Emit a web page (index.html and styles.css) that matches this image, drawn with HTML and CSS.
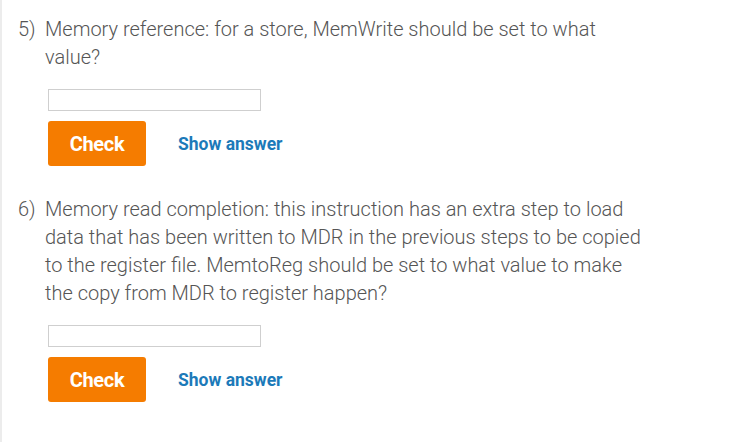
FILE: index.html
```html
<!DOCTYPE html>
<html>
<head>
<meta charset="utf-8">
<link rel="stylesheet" href="styles.css">
</head>
<body>
<div class="page">
  <div class="question">
    <div class="prompt">
      <span class="num">5)</span>
      <p class="text">Memory reference: for a store, MemWrite should be set to what value?</p>
    </div>
    <div class="answer">
      <input class="field" type="text">
      <div class="actions">
        <button class="check">Check</button>
        <span class="show">Show answer</span>
      </div>
    </div>
  </div>
  <div class="question">
    <div class="prompt">
      <span class="num">6)</span>
      <p class="text">Memory read completion: this instruction has an extra step to load data that has been written to MDR in the previous steps to be copied to the register file. MemtoReg should be set to what value to make the copy from MDR to register happen?</p>
    </div>
    <div class="answer">
      <input class="field" type="text">
      <div class="actions">
        <button class="check">Check</button>
        <span class="show">Show answer</span>
      </div>
    </div>
  </div>
</div>
</body>
</html>
```
FILE: styles.css
```css
html, body {
  margin: 0;
  padding: 0;
  background: #fff;
}
.page {
  border-left: 2px solid #ececec;
  height: 442px;
  box-sizing: border-box;
  padding: 15px 0 0 16px;
  font-family: Roboto, "Liberation Sans", sans-serif;
}
.question {
  display: flex;
  flex-direction: column;
  margin-bottom: 29px;
}
.prompt {
  display: flex;
  color: #555;
  font-size: 20px;
  font-weight: 300;
  line-height: 28px;
}
.num {
  width: 27px;
  flex: none;
}
.text {
  margin: 0;
  width: 600px;
}
.answer {
  padding-left: 30px;
  display: flex;
  flex-direction: column;
  gap: 10px;
  margin-top: 18px;
}
.field {
  width: 213px;
  height: 22px;
  box-sizing: border-box;
  border: 1px solid #cfcfcf;
  margin: 0;
  padding: 0;
}
.actions {
  display: flex;
  align-items: center;
  gap: 32px;
}
.check {
  width: 98px;
  height: 45px;
  background: #f57c00;
  color: #fff;
  border: none;
  border-radius: 3px;
  font-family: Roboto, "Liberation Sans", sans-serif;
  font-weight: 700;
  font-size: 20px;
  letter-spacing: -0.3px;
  padding: 0;
}
.show {
  color: #1c7ab9;
  font-weight: 700;
  font-size: 17.5px;
}
```
